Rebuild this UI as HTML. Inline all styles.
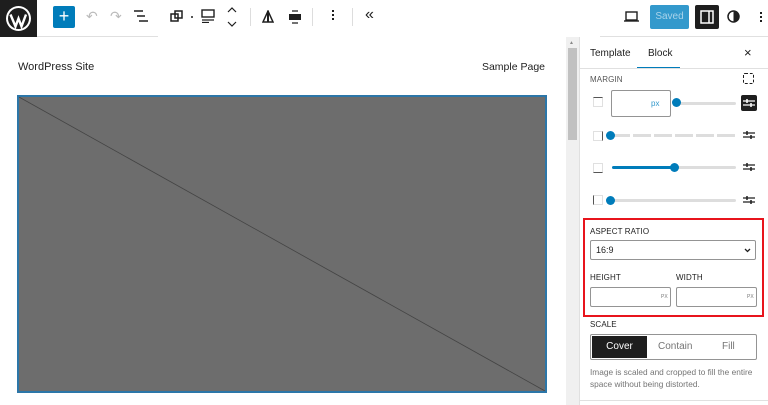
<!DOCTYPE html>
<html><head><meta charset="utf-8"><style>
*{box-sizing:border-box;margin:0;padding:0}
body{width:768px;height:405px;overflow:hidden;background:#fff;font-family:"Liberation Sans",sans-serif;color:#1e1e1e;position:relative}
.a{position:absolute}
.lbl{font-size:8px;text-transform:uppercase;color:#1e1e1e;letter-spacing:.1px}
.track{height:3px;background:#ddd;border-radius:2px}
.dot{width:10px;height:10px;border-radius:50%;background:#007cba}
.inp{border:1px solid #949494;border-radius:2px;background:#fff}
</style></head><body>
<div class="a" style="left:0;top:0;width:37px;height:37px;background:#1e1e1e"></div>
<svg class="a" style="left:5px;top:5px" width="27" height="27" viewBox="0 0 27 27"><circle cx="13.5" cy="13.5" r="12.5" fill="#fff"/><circle cx="13.5" cy="13.5" r="10.5" fill="#1e1e1e"/><path d="M5.5 9.5l5 12 3-8 3 8 4.5-12" stroke="#fff" stroke-width="2.4" fill="none"/></svg>
<div class="a" style="left:37px;top:36px;width:121px;height:1px;background:#e0e0e0"></div>
<div class="a" style="left:600px;top:36px;width:168px;height:1px;background:#e0e0e0"></div>
<div class="a" style="left:53px;top:6px;width:22px;height:22px;background:#007cba;border-radius:2px;color:#fff;font-size:18px;line-height:21px;text-align:center">+</div>
<div class="a" style="left:86px;top:8px;font-size:14px;color:#bbb">↶</div>
<div class="a" style="left:110px;top:8px;font-size:14px;color:#bbb">↷</div>
<svg class="a" style="left:134px;top:10px" width="14" height="12"><path d="M0 1h9M3 6h8M5 11h9" stroke="#1e1e1e" stroke-width="1.5"/></svg>
<svg class="a" style="left:170px;top:10px" width="13" height="13"><rect x="1" y="4" width="7" height="7" fill="none" stroke="#1e1e1e" stroke-width="1.5"/><rect x="5" y="1" width="7" height="7" fill="none" stroke="#1e1e1e" stroke-width="1.5"/></svg>
<div class="a" style="left:191px;top:16px;width:2px;height:2px;background:#555"></div>
<svg class="a" style="left:201px;top:9px" width="14" height="14"><rect x="1" y="1" width="12" height="7" fill="none" stroke="#1e1e1e" stroke-width="1.4"/><path d="M1 11h12M1 13.5h7" stroke="#1e1e1e" stroke-width="1.2"/></svg>
<svg class="a" style="left:226px;top:7px" width="12" height="20"><path d="M2 5l4-4 4 4M2 15l4 4 4-4" stroke="#1e1e1e" stroke-width="1.2" fill="none"/></svg>
<div class="a" style="left:250px;top:8px;width:1px;height:18px;background:#ddd"></div>
<svg class="a" style="left:262px;top:10px" width="12" height="13"><path d="M6 1L1 12h10z" fill="none" stroke="#1e1e1e" stroke-width="1.5"/><path d="M6 1v11" stroke="#1e1e1e" stroke-width="2"/></svg>
<svg class="a" style="left:289px;top:10px" width="12" height="14"><path d="M3 1h6M3 13h6" stroke="#1e1e1e" stroke-width="1.2"/><rect x="0" y="4" width="12" height="6" fill="#1e1e1e"/></svg>
<div class="a" style="left:312px;top:8px;width:1px;height:18px;background:#ddd"></div>
<div class="a" style="left:332px;top:10px;width:2px;height:2px;background:#1e1e1e;box-shadow:0 4px 0 #1e1e1e,0 8px 0 #1e1e1e"></div>
<div class="a" style="left:352px;top:8px;width:1px;height:18px;background:#ddd"></div>
<div class="a" style="left:365px;top:6px;font-size:16px">«</div>
<svg class="a" style="left:624px;top:11px" width="15" height="11"><rect x="2" y="1" width="11" height="8" fill="none" stroke="#1e1e1e" stroke-width="1.4"/><path d="M0 10h15" stroke="#1e1e1e" stroke-width="1.4"/></svg>
<div class="a" style="left:650px;top:5px;width:39px;height:24px;background:#3399cc;border-radius:2px;color:#a9d3ea;font-size:10px;line-height:24px;text-align:center">Saved</div>
<div class="a" style="left:695px;top:5px;width:24px;height:24px;background:#1e1e1e;border-radius:2px"></div>
<svg class="a" style="left:700px;top:10px" width="14" height="14"><rect x="1" y="1" width="12" height="12" fill="none" stroke="#fff" stroke-width="1.5"/><path d="M9 1v12" stroke="#fff" stroke-width="1.5"/></svg>
<svg class="a" style="left:727px;top:10px" width="13" height="13"><circle cx="6.5" cy="6.5" r="5.5" fill="none" stroke="#1e1e1e" stroke-width="1.5"/><path d="M6.5 1a5.5 5.5 0 0 1 0 11z" fill="#1e1e1e"/></svg>
<div class="a" style="left:760px;top:12px;width:2px;height:2px;background:#1e1e1e;box-shadow:0 4px 0 #1e1e1e,0 8px 0 #1e1e1e"></div>
<div class="a" style="left:18px;top:61px;font-size:11px;color:#1e1e1e">WordPress Site</div>
<div class="a" style="right:223px;top:61px;font-size:10.5px;color:#1e1e1e">Sample Page</div>
<div class="a" style="left:17px;top:95px;width:530px;height:298px;background:#6d6d6d;border:2px solid #2c76a8"></div>
<svg class="a" style="left:19px;top:97px" width="526" height="294"><line x1="0" y1="0" x2="526" y2="294" stroke="#444" stroke-width="0.8"/></svg>
<div class="a" style="left:566px;top:37px;width:13px;height:368px;background:#f0f0f0"></div>
<div class="a" style="left:569px;top:40px;font-size:5px;color:#888">▲</div>
<div class="a" style="left:568px;top:48px;width:9px;height:92px;background:#c1c1c1"></div>
<div class="a" style="left:579px;top:37px;width:1px;height:368px;background:#e0e0e0"></div>
<div class="a" style="left:590px;top:48px;font-size:10px">Template</div>
<div class="a" style="left:648px;top:48px;font-size:10px">Block</div>
<div class="a" style="left:637px;top:67px;width:43px;height:2px;background:#007cba"></div>
<div class="a" style="left:580px;top:68px;width:188px;height:1px;background:#e0e0e0"></div>
<div class="a" style="left:744px;top:45px;font-size:13px">×</div>
<div class="a lbl" style="left:590px;top:75px;color:#555">Margin</div>
<div class="a" style="left:743px;top:73px;width:11px;height:11px;border:1px dashed #1e1e1e;border-radius:2px"></div>
<div class="a" style="left:593px;top:97px;width:10px;height:10px;border:1px solid #e0e0e0;border-top:1px solid #555"></div>
<div class="a inp" style="left:611px;top:90px;width:60px;height:27px"></div>
<div class="a" style="left:651px;top:99px;font-size:8px;color:#3399cc">px</div>
<div class="a track" style="left:678px;top:102px;width:58px"></div>
<div class="a dot" style="left:672px;top:98px;width:9px;height:9px"></div>
<div class="a" style="left:741px;top:95px;width:16px;height:16px;background:#1e1e1e;border-radius:2px"></div>
<svg class="a" style="left:743px;top:98px" width="12" height="10"><path d="M0 3h12M0 7h12" stroke="#fff" stroke-width="1.2"/><path d="M4 1v4M8 5v4" stroke="#fff" stroke-width="1.5"/></svg>
<div class="a" style="left:593px;top:131px;width:10px;height:10px;border:1px solid #e0e0e0;border-right:1px solid #555"></div>
<div class="a track" style="left:612px;top:134px;width:124px;background:repeating-linear-gradient(90deg,#ddd 0 18px,#fff 18px 21px)"></div>
<div class="a dot" style="left:606px;top:131px;width:9px;height:9px"></div>
<svg class="a" style="left:743px;top:130px" width="12" height="10"><path d="M0 3h12M0 7h12" stroke="#1e1e1e" stroke-width="1.2"/><path d="M4 1v4M8 5v4" stroke="#1e1e1e" stroke-width="1.5"/></svg>
<div class="a" style="left:593px;top:163px;width:10px;height:10px;border:1px solid #e0e0e0;border-bottom:1px solid #555"></div>
<div class="a track" style="left:612px;top:166px;width:124px;background:linear-gradient(90deg,#007cba 0 64px,#ddd 64px)"></div>
<div class="a dot" style="left:670px;top:163px;width:9px;height:9px"></div>
<svg class="a" style="left:743px;top:162px" width="12" height="10"><path d="M0 3h12M0 7h12" stroke="#1e1e1e" stroke-width="1.2"/><path d="M4 1v4M8 5v4" stroke="#1e1e1e" stroke-width="1.5"/></svg>
<div class="a" style="left:593px;top:195px;width:10px;height:10px;border:1px solid #e0e0e0;border-left:1px solid #555"></div>
<div class="a track" style="left:612px;top:199px;width:124px"></div>
<div class="a dot" style="left:606px;top:196px;width:9px;height:9px"></div>
<svg class="a" style="left:743px;top:195px" width="12" height="10"><path d="M0 3h12M0 7h12" stroke="#1e1e1e" stroke-width="1.2"/><path d="M4 1v4M8 5v4" stroke="#1e1e1e" stroke-width="1.5"/></svg>
<div class="a" style="left:583px;top:218px;width:181px;height:99px;border:2px solid #e8141c"></div>
<div class="a lbl" style="left:590px;top:227px">Aspect Ratio</div>
<div class="a inp" style="left:590px;top:240px;width:166px;height:20px"></div>
<div class="a" style="left:596px;top:245px;font-size:9px">16:9</div>
<svg class="a" style="left:744px;top:248px" width="7" height="5"><path d="M1 1l2.5 2.5L6 1" stroke="#1e1e1e" stroke-width="1.3" fill="none"/></svg>
<div class="a lbl" style="left:590px;top:273px">Height</div>
<div class="a lbl" style="left:676px;top:273px">Width</div>
<div class="a inp" style="left:590px;top:287px;width:81px;height:20px"></div>
<div class="a inp" style="left:676px;top:287px;width:81px;height:20px"></div>
<div class="a" style="left:661px;top:294px;font-size:5px;color:#777">PX</div>
<div class="a" style="left:747px;top:294px;font-size:5px;color:#777">PX</div>
<div class="a lbl" style="left:590px;top:320px">Scale</div>
<div class="a" style="left:590px;top:334px;width:167px;height:26px;border:1px solid #949494;border-radius:2px"></div>
<div class="a" style="left:592px;top:336px;width:55px;height:22px;background:#1e1e1e;color:#fff;font-size:10px;line-height:22px;text-align:center">Cover</div>
<div class="a" style="left:658px;top:341px;font-size:10px;color:#757575">Contain</div>
<div class="a" style="left:722px;top:341px;font-size:10px;color:#757575">Fill</div>
<div class="a" style="left:590px;top:366px;font-size:8.3px;line-height:12px;color:#757575;width:170px">Image is scaled and cropped to fill the entire space without being distorted.</div>
<div class="a" style="left:580px;top:400px;width:188px;height:1px;background:#e0e0e0"></div>
</body></html>
